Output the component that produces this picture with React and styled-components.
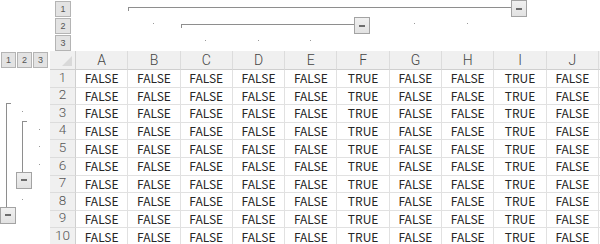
import React from 'react';
import styled, { createGlobalStyle } from 'styled-components';

const COL_W = 52.3;
const ROW_H = 17.6;
const HEAD_H = 19;
const ROWHEAD_W = 26;
const LINE = '#8e8e8e';

const columns = ['A', 'B', 'C', 'D', 'E', 'F', 'G', 'H', 'I', 'J'];
const trueColumns = ['F', 'I'];
const rows = [1, 2, 3, 4, 5, 6, 7, 8, 9, 10];

// outline marks per level, one entry per column (top) or row (left)
const columnOutline = [
  ['', 'start', 'line', 'line', 'line', 'line', 'line', 'line', 'end', ''],
  ['', 'dot', 'start', 'line', 'line', 'end', 'dot', 'dot', '', ''],
  ['', '', 'dot', 'dot', 'dot', '', '', '', '', ''],
];
const rowOutline = [
  ['', '', 'start', 'line', 'line', 'line', 'line', 'line', 'end', ''],
  ['', '', 'dot', 'start', 'line', 'line', 'end', 'dot', '', ''],
  ['', '', '', 'dot', 'dot', 'dot', '', '', '', ''],
];

const GlobalStyle = createGlobalStyle`
  html, body {
    margin: 0;
    padding: 0;
    background: #fff;
  }
  body {
    font-family: "Noto Sans CJK SC", "Noto Sans", sans-serif;
  }
`;

const Page = styled.div`
  width: 600px;
  height: 244px;
  overflow: hidden;
  display: grid;
  grid-template-columns: 50px 1fr;
  grid-template-rows: 51px 1fr;
`;

const Blank = styled.div``;

const TopOutline = styled.div`
  display: grid;
  grid-template-columns: ${ROWHEAD_W}px repeat(10, ${COL_W}px);
  grid-template-rows: repeat(3, 17px);
`;

const LeftOutline = styled.div`
  display: grid;
  grid-template-columns: repeat(3, 16px);
  grid-template-rows: ${HEAD_H}px repeat(10, ${ROW_H}px);
`;

const LevelSlot = styled.div`
  display: flex;
  justify-content: ${({ $dir }) => ($dir === 'h' ? 'center' : 'flex-start')};
  align-items: flex-start;
  padding: ${({ $dir }) => ($dir === 'h' ? '1px 0 0 0' : '1px 0 0 1px')};
`;

const LevelButton = styled.div`
  box-sizing: border-box;
  width: 16px;
  height: 16px;
  display: flex;
  align-items: center;
  justify-content: center;
  background: #e3e3e3;
  border: 1px solid #b4b4b4;
  color: #555;
  font-family: "Liberation Sans", Arial, sans-serif;
  font-size: 9px;
  line-height: 1;
`;

const MarkCell = styled.div`
  display: flex;
  flex-direction: ${({ $dir }) => ($dir === 'h' ? 'row' : 'column')};
  min-width: 0;
  min-height: 0;
`;

const HRule = styled.div`
  flex: 1;
  height: ${({ $tick }) => ($tick ? '3px' : '0')};
  margin-top: 7px;
  border-top: 1px solid ${LINE};
  border-left: ${({ $tick }) => ($tick ? `1px solid ${LINE}` : 'none')};
`;

const HRuleShort = styled.div`
  width: 16.5px;
  flex: none;
  margin-top: 7px;
  border-top: 1px solid ${LINE};
`;

const VRule = styled.div`
  flex: 1;
  width: ${({ $tick }) => ($tick ? '4px' : '0')};
  margin-left: 6px;
  margin-top: ${({ $tick }) => ($tick ? '-2px' : '0')};
  border-left: 1px solid ${LINE};
  border-top: ${({ $tick }) => ($tick ? `1px solid ${LINE}` : 'none')};
`;

const VRuleShort = styled.div`
  height: 0;
  flex: none;
`;

const Dot = styled.span`
  display: block;
  width: 1px;
  height: 1px;
  background: #9a9a9a;
  margin: ${({ $dir, $offset }) =>
    $dir === 'h' ? `6px 0 0 ${COL_W / 2 - 1.5}px` : `${ROW_H / 2 - 3}px 0 0 ${$offset}px`};
`;

const CollapseButton = styled.div`
  box-sizing: border-box;
  flex: none;
  width: 16px;
  height: 17px;
  display: flex;
  align-items: center;
  justify-content: center;
  background: linear-gradient(#f0f0f0, #e2e2e2);
  border: 1px solid #a3a3a3;
  margin-top: ${({ $dir }) => ($dir === 'h' ? '0' : '-4px')};

  &::after {
    content: '';
    width: 6px;
    height: 2px;
    background: #6d6d6d;
  }
`;

const OutlineMark = ({ kind, dir, level }) => {
  if (kind === 'line' || kind === 'start') {
    return (
      <MarkCell $dir={dir}>
        {dir === 'h' ? <HRule $tick={kind === 'start'} /> : <VRule $tick={kind === 'start'} />}
      </MarkCell>
    );
  }
  if (kind === 'end') {
    return (
      <MarkCell $dir={dir}>
        {dir === 'h' ? <HRuleShort /> : <VRuleShort />}
        <CollapseButton $dir={dir} />
      </MarkCell>
    );
  }
  if (kind === 'dot') {
    return (
      <MarkCell $dir={dir}>
        <Dot $dir={dir} $offset={level === 1 ? 6 : 7} />
      </MarkCell>
    );
  }
  return <MarkCell $dir={dir} />;
};

const Sheet = styled.div`
  display: grid;
  grid-template-columns: ${ROWHEAD_W}px repeat(10, ${COL_W}px) 60px;
  grid-template-rows: ${HEAD_H}px repeat(10, ${ROW_H}px);
`;

const Corner = styled.div`
  box-sizing: border-box;
  background: #f0f0f0;
  border-right: 1px solid #cfcfcf;
  border-bottom: 1px solid #cfcfcf;
  display: flex;
  align-items: flex-end;
  justify-content: flex-end;
  padding: 0 3px 3px 0;

  &::after {
    content: '';
    width: 0;
    height: 0;
    border-left: 10px solid transparent;
    border-bottom: 10px solid #d9d9d9;
  }
`;

const ColumnHead = styled.div`
  box-sizing: border-box;
  background: #f0f0f0;
  border-right: 1px solid #dcdcdc;
  border-bottom: 1px solid #cfcfcf;
  display: flex;
  align-items: center;
  justify-content: center;
  color: #444;
  font-family: Roboto, "Noto Sans", sans-serif;
  font-size: 14px;
  font-weight: 300;
  line-height: 1;
`;

const RowHead = styled.div`
  box-sizing: border-box;
  background: #f0f0f0;
  border-right: 1px solid #cfcfcf;
  border-bottom: 1px solid #dcdcdc;
  padding-bottom: 2px;
  display: flex;
  align-items: center;
  justify-content: center;
  color: #555;
  font-family: Roboto, "Noto Sans", sans-serif;
  font-size: 13.5px;
  font-weight: 300;
  line-height: 1;
`;

const Cell = styled.div`
  box-sizing: border-box;
  border-right: 1px solid #e1e1e1;
  border-bottom: 1px solid #e1e1e1;
  display: flex;
  align-items: center;
  justify-content: center;
  color: #262626;
  font-size: 12px;
  line-height: 1;
  white-space: nowrap;
`;

const App = () => (
  <>
    <GlobalStyle />
    <Page>
      <Blank />
      <TopOutline>
        {columnOutline.map((marks, level) => (
          <React.Fragment key={level}>
            <LevelSlot $dir="h">
              <LevelButton>{level + 1}</LevelButton>
            </LevelSlot>
            {marks.map((kind, i) => (
              <OutlineMark key={i} kind={kind} dir="h" level={level} />
            ))}
          </React.Fragment>
        ))}
      </TopOutline>
      <LeftOutline>
        {[0, 1, 2].map((level) => (
          <LevelSlot key={level} $dir="v">
            <LevelButton>{level + 1}</LevelButton>
          </LevelSlot>
        ))}
        {rows.map((row, i) =>
          rowOutline.map((marks, level) => (
            <OutlineMark key={`${row}-${level}`} kind={marks[i]} dir="v" level={level} />
          ))
        )}
      </LeftOutline>
      <Sheet>
        <Corner />
        {columns.map((col) => (
          <ColumnHead key={col}>{col}</ColumnHead>
        ))}
        <ColumnHead />
        {rows.map((row) => (
          <React.Fragment key={row}>
            <RowHead>{row}</RowHead>
            {columns.map((col) => (
              <Cell key={col}>{trueColumns.includes(col) ? 'TRUE' : 'FALSE'}</Cell>
            ))}
            <Cell />
          </React.Fragment>
        ))}
      </Sheet>
    </Page>
  </>
);

export default App;
